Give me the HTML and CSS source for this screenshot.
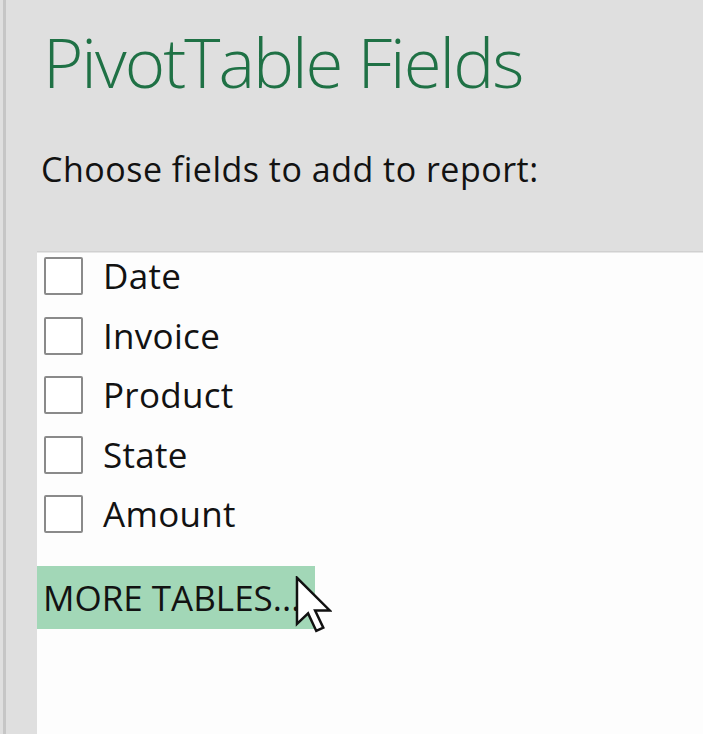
FILE: index.html
```html
<!DOCTYPE html>
<html lang="en">
<head>
<meta charset="utf-8">
<title>PivotTable Fields</title>
<link rel="stylesheet" href="styles.css">
</head>
<body>
<div class="pane">
  <header class="head">
    <h1 class="title">PivotTable Fields</h1>
    <p class="subtitle">Choose fields to add to report:</p>
  </header>
  <div class="list">
    <label class="row"><span class="box"></span><span class="name">Date</span></label>
    <label class="row"><span class="box"></span><span class="name">Invoice</span></label>
    <label class="row"><span class="box"></span><span class="name">Product</span></label>
    <label class="row"><span class="box"></span><span class="name">State</span></label>
    <label class="row"><span class="box"></span><span class="name">Amount</span></label>
    <div class="more">
      <span class="more-text">MORE TABLES...</span>
      <svg class="cursor" viewBox="0 0 12.5 19.5" width="37" height="57" aria-hidden="true">
        <path d="M0.6 0.6 L0.6 16.4 L4.4 12.8 L7.2 18.8 L9.6 17.7 L6.8 11.8 L11.8 11.8 Z" fill="#ffffff" stroke="#111111" stroke-width="0.85" stroke-linejoin="miter"/>
      </svg>
    </div>
  </div>
</div>
</body>
</html>
```

FILE: styles.css
```css
html, body {
  margin: 0;
  padding: 0;
}
body {
  width: 703px;
  height: 734px;
  overflow: hidden;
  background: #dfdfdf;
  font-family: "Open Sans", "Noto Sans", "Liberation Sans", sans-serif;
}
.pane {
  margin-left: 3px;
  border-left: 3px solid #c6c6c6;
  height: 734px;
  display: flex;
  flex-direction: column;
  box-sizing: border-box;
}
.head {
  padding: 27px 0 0 31px;
  height: 253px;
  box-sizing: border-box;
  flex: none;
}
.title {
  margin: 0;
  font-size: 69px;
  font-weight: 300;
  line-height: 1;
  letter-spacing: -2px;
  color: #1f7145;
  padding-left: 6px;
}
.subtitle {
  margin: 56px 0 0 0;
  padding-left: 4px;
  font-size: 34px;
  font-weight: 500;
  line-height: 1;
  letter-spacing: 0.5px;
  color: #121212;
}
.list {
  flex: 1;
  background: #fdfdfd;
  margin-left: 31px;
  padding-top: 4px;
  box-shadow: 0 -1px 0 #e6e6e6, 0 -2px 0 #d0d0d0;
  position: relative;
}
.row {
  display: flex;
  align-items: flex-start;
  height: 59.5px;
  padding-left: 7px;
}
.box {
  width: 35px;
  height: 34px;
  border: 2px solid #8a8a8a;
  border-radius: 2px;
  background: #ffffff;
  flex: none;
}
.name {
  margin-left: 20px;
  font-size: 35px;
  font-weight: 500;
  line-height: 38px;
  letter-spacing: 0.3px;
  color: #121212;
}
.more {
  position: relative;
  margin-top: 11.5px;
  width: 278px;
  height: 63px;
  background: #a2d7b7;
  box-sizing: border-box;
  padding-left: 6px;
  display: flex;
  align-items: center;
}
.more-text {
  font-size: 35px;
  font-weight: 500;
  line-height: 1;
  color: #121212;
  white-space: nowrap;
}
.cursor {
  position: absolute;
  left: 258px;
  top: 10px;
}
```
